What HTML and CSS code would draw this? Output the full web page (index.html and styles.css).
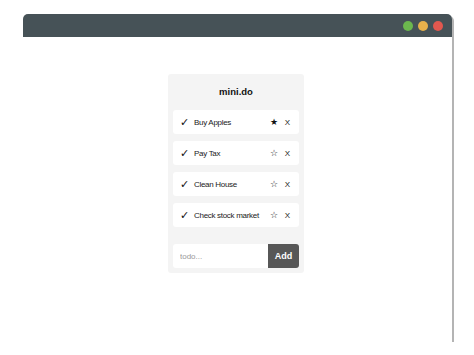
FILE: index.html
```html
<!DOCTYPE html>
<html lang="en">
<head>
    <meta charset="UTF-8">
    <meta name="viewport" content="width=device-width, initial-scale=1.0">
    <title>mini.do</title>
    <link rel="stylesheet" href="styles.css">
</head>
<body>
    <div class="window">
        <div class="titlebar">
            <span class="dot green"></span>
            <span class="dot yellow"></span>
            <span class="dot red"></span>
        </div>
        <div class="content">
            <div class="app">
                <h1>mini.do</h1>
                <ul class="todo-list">
                    <li class="todo">
                        <span class="check">✓</span>
                        <span class="text">Buy Apples</span>
                        <span class="star">★</span>
                        <span class="remove">X</span>
                    </li>
                    <li class="todo">
                        <span class="check">✓</span>
                        <span class="text">Pay Tax</span>
                        <span class="star">☆</span>
                        <span class="remove">X</span>
                    </li>
                    <li class="todo">
                        <span class="check">✓</span>
                        <span class="text">Clean House</span>
                        <span class="star">☆</span>
                        <span class="remove">X</span>
                    </li>
                    <li class="todo">
                        <span class="check">✓</span>
                        <span class="text">Check stock market</span>
                        <span class="star">☆</span>
                        <span class="remove">X</span>
                    </li>
                </ul>
                <form class="add-form">
                    <input type="text" placeholder="todo...">
                    <button type="button">Add</button>
                </form>
            </div>
        </div>
    </div>
</body>
</html>
```

FILE: styles.css
```css
* {
    box-sizing: border-box;
    margin: 0;
    padding: 0;
}

body {
    font-family: 'Liberation Sans', Arial, sans-serif;
    background: #fff;
    padding: 14px 0 0 23px;
}

.window {
    width: 429px;
    height: 328px;
    background: #fff;
    border-radius: 5px 5px 0 0;
    box-shadow: 2px 2px 0 #b4b4b4;
}

.titlebar {
    height: 23px;
    background: #465257;
    border-radius: 5px 5px 0 0;
    display: flex;
    justify-content: flex-end;
    align-items: center;
    gap: 5px;
    padding-right: 9px;
}

.dot {
    width: 10px;
    height: 10px;
    border-radius: 50%;
}

.green { background: #6cb84e; }
.yellow { background: #e8b14b; }
.red { background: #e2584f; }

.content {
    display: flex;
    justify-content: center;
    padding-top: 37px;
    padding-right: 3px;
}

.app {
    width: 136px;
    background: #f4f4f4;
    border-radius: 3px;
    padding: 0 5px 5px;
}

h1 {
    font-size: 9.5px;
    font-weight: bold;
    color: #111;
    text-align: center;
    line-height: 36px;
}

.todo-list {
    list-style: none;
    display: flex;
    flex-direction: column;
    gap: 7px;
}

.todo {
    height: 24px;
    background: #fff;
    border-radius: 3px;
    display: flex;
    align-items: center;
    font-size: 8px;
    letter-spacing: -0.3px;
    color: #222;
    padding: 0 9px 0 7px;
}

.check {
    font-size: 11px;
    width: 14px;
    color: #111;
}

.text {
    flex: 1;
}

.star {
    font-size: 9px;
    width: 18px;
    text-align: center;
    margin-right: 2px;
    color: #111;
}

.remove {
    font-size: 8px;
    letter-spacing: 0;
}

.add-form {
    display: flex;
    margin-top: 17px;
    height: 24px;
}

.add-form input {
    flex: 1;
    min-width: 0;
    border: none;
    background: #fff;
    border-radius: 3px 0 0 3px;
    padding-left: 7px;
    font-family: inherit;
    font-size: 8px;
    color: #333;
    outline: none;
}

.add-form input::placeholder {
    color: #999;
}

.add-form button {
    width: 31px;
    border: none;
    background: #575757;
    color: #fff;
    font-family: inherit;
    font-weight: bold;
    font-size: 9px;
    border-radius: 0 3px 3px 0;
}
```
